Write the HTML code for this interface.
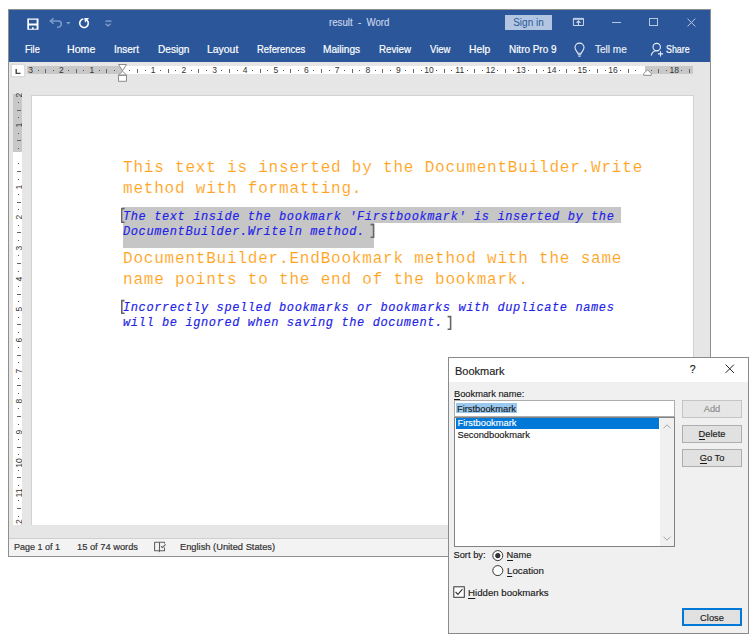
<!DOCTYPE html>
<html><head><meta charset="utf-8">
<style>
*{margin:0;padding:0;box-sizing:border-box}
html,body{width:756px;height:643px;overflow:hidden;background:#fff;font-family:"Liberation Sans",sans-serif}
.a{position:absolute}
svg{position:absolute;overflow:visible}
#win{left:8px;top:9px;width:703px;height:548px;border:1px solid #8f8f8f;background:#e6e6e6}
#title{left:9px;top:10px;width:701px;height:52px;background:#2b579a}
.tab{position:absolute;top:43px;transform-origin:0 0;-webkit-text-stroke:0.2px #fff;color:#fff;font-size:10.5px;white-space:nowrap;line-height:12px}
#page{left:31px;top:95px;width:663px;height:430px;background:#fff;border:1px solid #d2d2d2;border-bottom:0}
#status{left:9px;top:538px;width:701px;height:18px;background:#f3f3f3;border-top:1px solid #cfcfcf}
.st{position:absolute;top:542px;transform-origin:0 0;font-size:9.3px;color:#333;white-space:nowrap;line-height:11px;-webkit-text-stroke:0.2px #333}
.or{position:absolute;left:123px;font-family:"Liberation Mono",monospace;font-size:16px;letter-spacing:0.8px;color:#ffa31a;-webkit-text-stroke:0.12px #fff;white-space:pre;line-height:20px}
.bl{position:absolute;left:123px;font-family:"Liberation Mono",monospace;font-style:italic;font-size:12px;letter-spacing:0.6px;color:#2222e6;-webkit-text-stroke:0.15px #2222e6;white-space:pre;line-height:15.1px}
/* rulers */
.rn{position:absolute;top:64.5px;width:20px;text-align:center;font-size:8.5px;line-height:10px;color:#333;transform:translateX(0.3px)}
.rd{position:absolute;top:70px;width:1px;height:1px;background:#555}
.rt{position:absolute;top:69px;width:1px;height:4px;background:#666}
.vn{position:absolute;left:8.5px;width:20px;height:10px;text-align:center;font-size:8.5px;line-height:10px;color:#333;transform:rotate(-90deg)}
.vd{position:absolute;left:18px;width:1px;height:1px;background:#555}
.vt{position:absolute;left:17px;width:4px;height:1px;background:#666}
#dlg{left:448px;top:357px;width:301px;height:277px;background:#f0f0f0;border:1px solid #8a8a8a}
.dt{position:absolute;transform-origin:0 0;font-size:9.3px;color:#1a1a1a;white-space:nowrap;line-height:11px;-webkit-text-stroke:0.15px currentColor}
.btn{position:absolute;left:682px;width:60px;height:17.5px;background:#e1e1e1;border:1px solid #adadad;font-size:9.3px;-webkit-text-stroke:0.15px currentColor;line-height:15px;padding-top:1px;text-align:center;color:#1a1a1a}
u{text-decoration:none;border-bottom:1px solid currentColor;line-height:9px;display:inline-block}
</style></head><body>
<div class="a" id="win"></div>
<div class="a" id="title"></div>

<!-- QAT icons -->
<svg style="left:26.5px;top:17.5px" width="12" height="13" viewBox="0 0 12 13"><path fill="#fff" fill-rule="evenodd" d="M0.3 0.4H11.5V11.7H0.3Z M2 1.7V5.6H9.6V1.7Z M2 7.6V10.8H5V9.3H6.6V10.8H9.6V7.6Z"/></svg>
<svg style="left:49px;top:17px" width="14" height="12" viewBox="0 0 14 12"><path fill="none" stroke="#7f9ccc" stroke-width="1.5" d="M1.2 4H9.5C11.5 4 12.3 5.6 12.3 7C12.3 8.8 11 10.3 8 10.3"/><path fill="none" stroke="#7f9ccc" stroke-width="1.5" d="M4.6 1.2L1.3 4L4.6 6.8"/></svg>
<svg style="left:65.5px;top:21.5px" width="5" height="3" viewBox="0 0 5 3"><path fill="#7f9ccc" d="M0 0H4.6L2.3 2.6Z"/></svg>
<svg style="left:76px;top:15px" width="16" height="16" viewBox="0 0 16 16"><path fill="none" stroke="#fff" stroke-width="1.6" d="M7.25 3.97A4.3 4.3 0 1 0 11.04 5.16"/><path fill="#fff" d="M8.3 3.1H13.1L9 7.7Z"/></svg>
<svg style="left:104.5px;top:19.5px" width="7" height="7" viewBox="0 0 7 7"><path fill="none" stroke="#8ca6d2" stroke-width="1.2" d="M0.4 1.1H6.5M0.7 3.8L3 6L5.8 3.6"/></svg>

<div class="a" style="left:328.7px;top:17.3px;font-size:10px;color:#c9d6ea;white-space:nowrap;line-height:11px;transform:scaleX(0.965);transform-origin:0 0;-webkit-text-stroke:0.15px #c9d6ea">result&nbsp; - &nbsp;Word</div>
<div class="a" style="left:505px;top:15px;width:47px;height:15px;background:#b3c6e1"></div>
<div class="a" style="left:505px;top:16.5px;width:47px;text-align:center;font-size:10px;line-height:12px;color:#2b579a">Sign in</div>

<svg style="left:572px;top:17px" width="13" height="10" viewBox="0 0 13 10"><path fill="none" stroke="#c9d5ea" stroke-width="1" d="M1.4 1.4H11.5V8.5H1.4Z"/><path fill="#c9d5ea" d="M1.4 1.4H11.5V2.8H1.4Z M6.45 3.1L3.7 5.8H5.9V8.5H7V5.8H9.2Z"/></svg>
<div class="a" style="left:612px;top:22px;width:8.5px;height:1px;background:#b9c8e2"></div>
<div class="a" style="left:649px;top:18px;width:9px;height:8px;border:1px solid #b9c8e2"></div>
<svg style="left:686.5px;top:17.5px" width="9" height="9" viewBox="0 0 9 9"><path stroke="#b9c8e2" stroke-width="1" d="M0.5 0.6L8.3 8.4M8.3 0.6L0.5 8.4"/></svg>

<div class="tab" style="left:25px;transform:scaleX(0.87)">File</div>
<div class="tab" style="left:66.5px;transform:scaleX(1.012)">Home</div>
<div class="tab" style="left:114.0px;transform:scaleX(0.950)">Insert</div>
<div class="tab" style="left:157.5px;transform:scaleX(0.960)">Design</div>
<div class="tab" style="left:206.6px;transform:scaleX(0.993)">Layout</div>
<div class="tab" style="left:256.6px;transform:scaleX(0.896)">References</div>
<div class="tab" style="left:323.4px;transform:scaleX(0.965)">Mailings</div>
<div class="tab" style="left:378.6px;transform:scaleX(0.928)">Review</div>
<div class="tab" style="left:429.5px;transform:scaleX(0.905)">View</div>
<div class="tab" style="left:469.0px;transform:scaleX(0.980)">Help</div>
<div class="tab" style="left:508.8px;transform:scaleX(0.945)">Nitro Pro 9</div>
<div class="tab" style="left:594.8px;transform:scaleX(0.955);color:#e6ecf6;-webkit-text-stroke:0.2px #e6ecf6">Tell me</div>
<div class="tab" style="left:666.4px;transform:scaleX(0.84)">Share</div>
<svg style="left:574px;top:42.5px" width="11" height="14" viewBox="0 0 11 14"><path fill="none" stroke="#e8eef7" stroke-width="1.1" d="M3.6 10.3C3.4 8.6 1 7.2 1 4.6A4.5 4.5 0 0 1 10 4.6C10 7.2 7.6 8.6 7.4 10.3Z M3.8 11.8H7.2 M4.4 13.2H6.6"/></svg>
<svg style="left:650px;top:42px" width="14" height="15" viewBox="0 0 14 15"><circle cx="6.7" cy="5.1" r="3.7" fill="none" stroke="#e8eef7" stroke-width="1.1"/><path fill="none" stroke="#e8eef7" stroke-width="1.1" d="M1.2 13.5C2 10.6 4 8.8 6.7 8.8C7.4 8.8 8 8.9 8.6 9.1 M10.5 9.3V14.6 M7.9 11.9H13.1"/></svg>

<!-- ruler -->
<div class="a" style="left:11.5px;top:65px;width:12.5px;height:10.5px;background:#fff;box-shadow:0 0 0 1.5px #dadada"></div>
<svg style="left:14.5px;top:68.5px" width="6" height="6" viewBox="0 0 6 6"><path fill="#444" d="M0.5 0H1.9V3.8H5.5V5H0.5Z"/></svg>
<div class="a" style="left:26.5px;top:66px;width:96px;height:7.5px;background:#c8c8c8"></div>
<div class="a" style="left:122.5px;top:66px;width:522px;height:7.5px;background:#fff"></div>
<div class="a" style="left:644.5px;top:66px;width:48px;height:7.5px;background:#c8c8c8"></div>
<div class="rn" style="left:20.35px">3</div>
<div class="rd" style="left:38px"></div>
<div class="rt" style="left:45px"></div>
<div class="rd" style="left:53px"></div>
<div class="rn" style="left:51.00px">2</div>
<div class="rd" style="left:68px"></div>
<div class="rt" style="left:76px"></div>
<div class="rd" style="left:83px"></div>
<div class="rn" style="left:81.65px">1</div>
<div class="rd" style="left:99px"></div>
<div class="rt" style="left:106px"></div>
<div class="rd" style="left:114px"></div>
<div class="rd" style="left:129px"></div>
<div class="rt" style="left:137px"></div>
<div class="rd" style="left:145px"></div>
<div class="rn" style="left:142.95px">1</div>
<div class="rd" style="left:160px"></div>
<div class="rt" style="left:168px"></div>
<div class="rd" style="left:175px"></div>
<div class="rn" style="left:173.60px">2</div>
<div class="rd" style="left:191px"></div>
<div class="rt" style="left:198px"></div>
<div class="rd" style="left:206px"></div>
<div class="rn" style="left:204.25px">3</div>
<div class="rd" style="left:221px"></div>
<div class="rt" style="left:229px"></div>
<div class="rd" style="left:237px"></div>
<div class="rn" style="left:234.90px">4</div>
<div class="rd" style="left:252px"></div>
<div class="rt" style="left:260px"></div>
<div class="rd" style="left:267px"></div>
<div class="rn" style="left:265.55px">5</div>
<div class="rd" style="left:283px"></div>
<div class="rt" style="left:290px"></div>
<div class="rd" style="left:298px"></div>
<div class="rn" style="left:296.20px">6</div>
<div class="rd" style="left:313px"></div>
<div class="rt" style="left:321px"></div>
<div class="rd" style="left:329px"></div>
<div class="rn" style="left:326.85px">7</div>
<div class="rd" style="left:344px"></div>
<div class="rt" style="left:352px"></div>
<div class="rd" style="left:359px"></div>
<div class="rn" style="left:357.50px">8</div>
<div class="rd" style="left:375px"></div>
<div class="rt" style="left:382px"></div>
<div class="rd" style="left:390px"></div>
<div class="rn" style="left:388.15px">9</div>
<div class="rd" style="left:405px"></div>
<div class="rt" style="left:413px"></div>
<div class="rd" style="left:421px"></div>
<div class="rn" style="left:418.80px">10</div>
<div class="rd" style="left:436px"></div>
<div class="rt" style="left:444px"></div>
<div class="rd" style="left:451px"></div>
<div class="rn" style="left:449.45px">11</div>
<div class="rd" style="left:467px"></div>
<div class="rt" style="left:474px"></div>
<div class="rd" style="left:482px"></div>
<div class="rn" style="left:480.10px">12</div>
<div class="rd" style="left:497px"></div>
<div class="rt" style="left:505px"></div>
<div class="rd" style="left:513px"></div>
<div class="rn" style="left:510.75px">13</div>
<div class="rd" style="left:528px"></div>
<div class="rt" style="left:536px"></div>
<div class="rd" style="left:543px"></div>
<div class="rn" style="left:541.40px">14</div>
<div class="rd" style="left:559px"></div>
<div class="rt" style="left:566px"></div>
<div class="rd" style="left:574px"></div>
<div class="rn" style="left:572.05px">15</div>
<div class="rd" style="left:589px"></div>
<div class="rt" style="left:597px"></div>
<div class="rd" style="left:605px"></div>
<div class="rn" style="left:602.70px">16</div>
<div class="rd" style="left:620px"></div>
<div class="rt" style="left:628px"></div>
<div class="rd" style="left:635px"></div>
<div class="rd" style="left:651px"></div>
<div class="rt" style="left:658px"></div>
<div class="rd" style="left:666px"></div>
<div class="rn" style="left:664.00px">18</div>
<div class="rd" style="left:681px"></div>
<div class="rt" style="left:689px"></div>
<svg style="left:118px;top:63.5px" width="9" height="18" viewBox="0 0 9 18"><path fill="#fff" stroke="#8c8c8c" stroke-width="1" d="M0.5 0.5H8.5L4.5 6.8Z M4.5 7.2L8.5 11V11.2H0.5V11Z M0.5 11.2H8.5V17.3H0.5Z"/></svg>
<svg style="left:643px;top:69px" width="9" height="7" viewBox="0 0 9 7"><path fill="#fff" stroke="#8c8c8c" stroke-width="1" d="M4.5 0.8L8.3 4.6V6.3H0.7V4.6Z"/></svg>

<!-- vertical ruler -->
<div class="a" style="left:13px;top:93.5px;width:9px;height:58.5px;background:#c8c8c8"></div>
<div class="a" style="left:13px;top:152px;width:9px;height:373px;background:#fff"></div>
<div class="a" style="left:13px;top:93px;width:9px;height:432px;overflow:hidden">
<div class="a" style="left:-13px;top:-93px;width:40px;height:600px">
<div class="vn" style="top:89.80px">2</div>
<div class="vd" style="top:102px"></div>
<div class="vt" style="top:110px"></div>
<div class="vd" style="top:117px"></div>
<div class="vn" style="top:120.45px">1</div>
<div class="vd" style="top:133px"></div>
<div class="vt" style="top:140px"></div>
<div class="vd" style="top:148px"></div>
<div class="vd" style="top:163px"></div>
<div class="vt" style="top:171px"></div>
<div class="vd" style="top:179px"></div>
<div class="vn" style="top:181.75px">1</div>
<div class="vd" style="top:194px"></div>
<div class="vt" style="top:202px"></div>
<div class="vd" style="top:209px"></div>
<div class="vn" style="top:212.40px">2</div>
<div class="vd" style="top:225px"></div>
<div class="vt" style="top:232px"></div>
<div class="vd" style="top:240px"></div>
<div class="vn" style="top:243.05px">3</div>
<div class="vd" style="top:255px"></div>
<div class="vt" style="top:263px"></div>
<div class="vd" style="top:271px"></div>
<div class="vn" style="top:273.70px">4</div>
<div class="vd" style="top:286px"></div>
<div class="vt" style="top:294px"></div>
<div class="vd" style="top:301px"></div>
<div class="vn" style="top:304.35px">5</div>
<div class="vd" style="top:317px"></div>
<div class="vt" style="top:324px"></div>
<div class="vd" style="top:332px"></div>
<div class="vn" style="top:335.00px">6</div>
<div class="vd" style="top:347px"></div>
<div class="vt" style="top:355px"></div>
<div class="vd" style="top:362px"></div>
<div class="vn" style="top:365.65px">7</div>
<div class="vd" style="top:378px"></div>
<div class="vt" style="top:385px"></div>
<div class="vd" style="top:393px"></div>
<div class="vn" style="top:396.30px">8</div>
<div class="vd" style="top:408px"></div>
<div class="vt" style="top:416px"></div>
<div class="vd" style="top:424px"></div>
<div class="vn" style="top:426.95px">9</div>
<div class="vd" style="top:439px"></div>
<div class="vt" style="top:447px"></div>
<div class="vd" style="top:454px"></div>
<div class="vn" style="top:457.60px">10</div>
<div class="vd" style="top:470px"></div>
<div class="vt" style="top:477px"></div>
<div class="vd" style="top:485px"></div>
<div class="vn" style="top:488.25px">11</div>
<div class="vd" style="top:500px"></div>
<div class="vt" style="top:508px"></div>
<div class="vd" style="top:516px"></div>
<div class="vn" style="top:518.90px">12</div>
</div></div>

<div class="a" id="page"></div>
<div class="a" id="status"></div>
<div class="st" style="left:14.3px;transform:scaleX(0.97)">Page 1 of 1</div>
<div class="st" style="left:77px">15 of 74 words</div>
<svg style="left:148px;top:538px" width="24" height="18" viewBox="0 0 24 18"><path fill="none" stroke="#5f5f5f" stroke-width="1.05" stroke-linejoin="round" d="M11.5 4.2H6.6V12.7H11.5V13.6V4.2H16.5V5.4M16.5 9.6V12.7H11.5M13 8.2L14.4 9.6L17.6 6.4"/></svg>
<div class="st" style="left:180px">English (United States)</div>

<div class="or" style="top:157.5px">This text is inserted by the DocumentBuilder.Write</div>
<div class="or" style="top:178.5px">method with formatting.</div>
<div class="a" style="left:122.5px;top:207px;width:498.5px;height:16px;background:#c6c6c6"></div>
<div class="a" style="left:122.5px;top:223px;width:251.5px;height:24.5px;background:#c6c6c6"></div>
<svg style="left:121px;top:208px" width="5" height="15" viewBox="0 0 5 15"><path fill="none" stroke="#666" stroke-width="1.6" d="M3.6 0.6H0.8V14.2H3.6"/></svg>
<svg style="left:369.5px;top:224px" width="5" height="14" viewBox="0 0 5 14"><path fill="none" stroke="#666" stroke-width="1.6" d="M0.6 0.6H3.6V13.2H0.6"/></svg>
<div class="bl" style="top:209.7px">The text inside the bookmark 'Firstbookmark' is inserted by the
DocumentBuilder.Writeln method. </div>
<div class="or" style="top:248.5px">DocumentBuilder.EndBookmark method with the same</div>
<div class="or" style="top:269.5px">name points to the end of the bookmark.</div>
<svg style="left:121px;top:300px" width="5" height="15" viewBox="0 0 5 15"><path fill="none" stroke="#666" stroke-width="1.6" d="M3.6 0.6H0.8V13.3H3.6"/></svg>
<svg style="left:447.3px;top:316px" width="5" height="14" viewBox="0 0 5 14"><path fill="none" stroke="#666" stroke-width="1.6" d="M0.6 0.6H3.6V13.2H0.6"/></svg>
<div class="bl" style="top:300.9px">Incorrectly spelled bookmarks or bookmarks with duplicate names
will be ignored when saving the document. </div>

<!-- dialog -->
<div class="a" id="dlg"></div>
<div class="a" style="left:449px;top:358px;width:299px;height:24px;background:#fff"></div>
<div class="dt" style="left:455px;top:364.5px;font-size:11px;line-height:12px">Bookmark</div>
<div class="dt" style="left:689.8px;top:362.5px;font-size:10.5px;line-height:12px">?</div>
<svg style="left:724.5px;top:364px" width="10" height="10" viewBox="0 0 10 10"><path stroke="#222" stroke-width="1" d="M0.6 0.6L8.9 8.9M8.9 0.6L0.6 8.9"/></svg>
<div class="dt" style="left:454px;top:388.8px"><u>B</u>ookmark name:</div>
<div class="a" style="left:454px;top:400px;width:221px;height:17px;background:#fff;border:1px solid #adadad"></div>
<div class="a" style="left:456px;top:403px;width:60.5px;height:10px;background:#99c9ef"></div>
<div class="dt" style="left:457px;top:403.8px">Firstbookmark</div>
<div class="a" style="left:454px;top:416.5px;width:221px;height:130px;background:#fff;border:1px solid #828282"></div>
<div class="a" style="left:660px;top:417.5px;width:14px;height:128px;background:#f0f0f0"></div>
<svg style="left:662.5px;top:423.5px" width="8" height="5" viewBox="0 0 8 5"><path fill="none" stroke="#a6a6a6" stroke-width="1" d="M0.5 4.3L4 0.8L7.5 4.3"/></svg>
<svg style="left:662.5px;top:535.5px" width="8" height="5" viewBox="0 0 8 5"><path fill="none" stroke="#a6a6a6" stroke-width="1" d="M0.5 0.7L4 4.2L7.5 0.7"/></svg>
<div class="a" style="left:456px;top:418px;width:203px;height:10.5px;background:#0078d7"></div>
<div class="dt" style="left:457.5px;top:418px;color:#fff">Firstbookmark</div>
<div class="dt" style="left:457.5px;top:429.5px">Secondbookmark</div>
<div class="btn" style="top:400px;color:#8d8d8d;background:#e6e6e6;border-color:#c4c4c4">Add</div>
<div class="btn" style="top:425px"><u>D</u>elete</div>
<div class="btn" style="top:449px"><u>G</u>o To</div>
<div class="dt" style="left:453.5px;top:549.5px">Sort by:</div>
<svg style="left:492px;top:550px" width="12" height="12" viewBox="0 0 12 12"><circle cx="5.8" cy="5.6" r="5" fill="#fff" stroke="#333" stroke-width="1"/><circle cx="5.8" cy="5.6" r="2.6" fill="#333"/></svg>
<div class="dt" style="left:506.5px;top:550px"><u>N</u>ame</div>
<svg style="left:492px;top:565px" width="12" height="12" viewBox="0 0 12 12"><circle cx="5.8" cy="5.6" r="5" fill="#fff" stroke="#333" stroke-width="1"/></svg>
<div class="dt" style="left:506.5px;top:565.5px;transform:scaleX(1.05)"><u>L</u>ocation</div>
<svg style="left:453px;top:586px" width="12" height="12" viewBox="0 0 12 12"><rect x="0.8" y="0.8" width="10.5" height="10.5" fill="#fff" stroke="#333" stroke-width="1"/><path fill="none" stroke="#333" stroke-width="1.1" d="M2.6 6L4.9 8.4L9.5 3.2"/></svg>
<div class="dt" style="left:467.5px;top:587.5px;transform:scaleX(1.04)"><u>H</u>idden bookmarks</div>
<div class="btn" style="top:608px;height:18px;border:2px solid #0078d7;line-height:13.5px;padding-top:1.5px"><span style="display:inline-block">Close</span></div>
</body></html>
